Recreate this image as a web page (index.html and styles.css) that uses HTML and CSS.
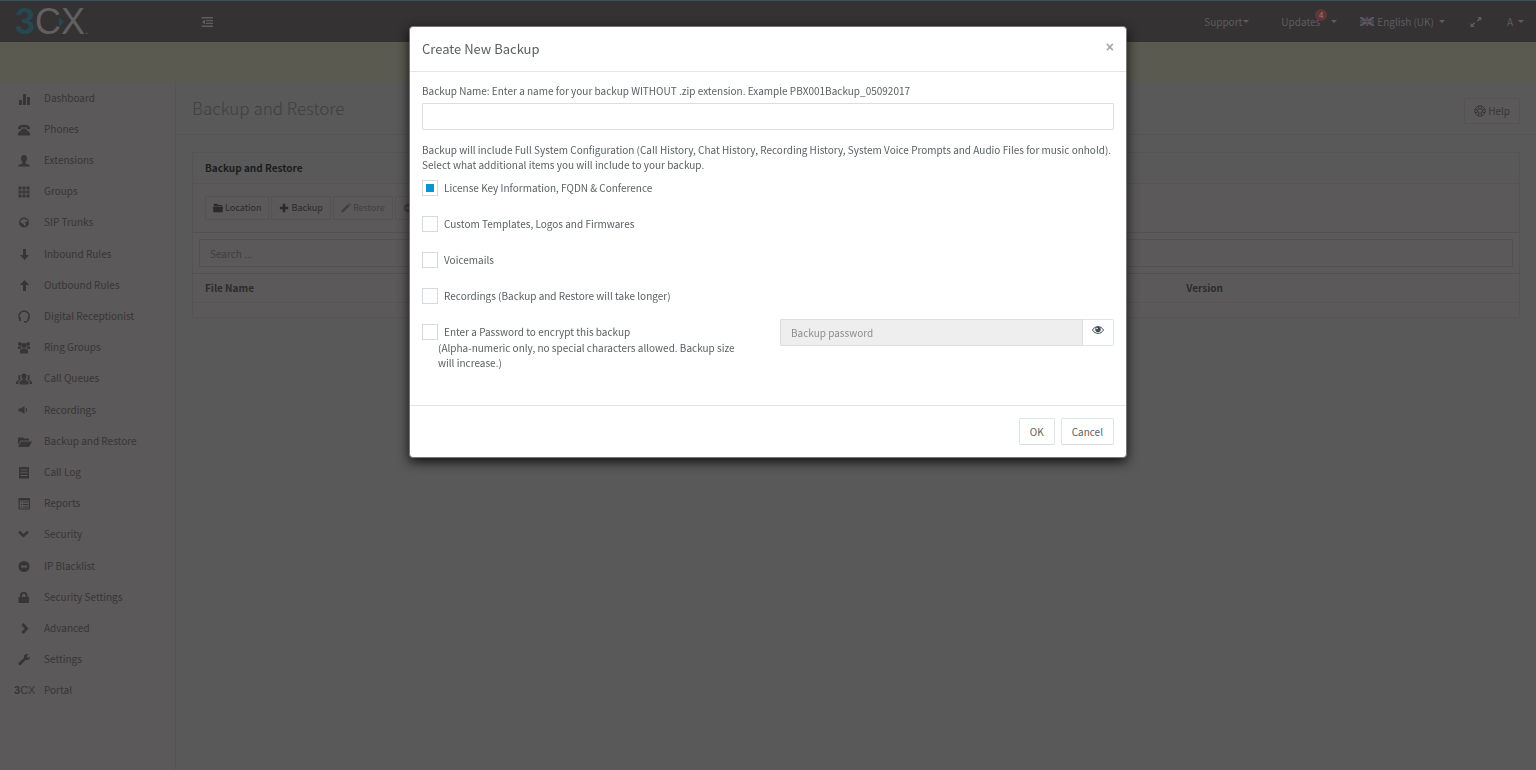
FILE: index.html
```html
<!DOCTYPE html>
<html lang="en">
<head>
<meta charset="utf-8">
<title>3CX - Backup and Restore</title>
<link rel="stylesheet" href="styles.css">
</head>
<body>
<header class="topbar">
  <a class="logo" href="#" aria-label="3CX"><b>3</b><span>CX</span><small>.</small><svg class="logo-arrow" viewBox="0 0 5 10"><path d="M0 0l5 5-5 5z"/></svg></a>
  <button class="menu-toggle" aria-label="Toggle menu"><svg class="icon" viewBox="0 0 16 16"><path d="M2.500 3H14v1.500H2.500zM7 6h7v1.300H7zM7 8.700h7V10H7zM2.500 11.500H14V13H2.500zM6 5.500v5L3 8z"/></svg></button>
  <nav class="topnav">
    <a class="t-support" href="#">Support<i class="caret"></i></a>
    <a class="t-updates" href="#">Updates<span class="badge">4</span><i class="caret"></i></a>
    <a class="t-lang" href="#"><svg class="flag" viewBox="0 0 14 9"><path class="flag-bg" d="M0 0h14v9H0z"/><path class="flag-white" d="M0 0l14 9M14 0L0 9M7 0v9M0 4.500h14"/><path class="flag-red" d="M7 0v9M0 4.500h14"/></svg>English (UK)<i class="caret"></i></a>
    <a class="t-full" href="#" aria-label="Full screen"><svg class="icon" viewBox="0 0 16 16"><path d="M9.500 3H13.500v4l-1.400-1.400-2.200 2.100L8.800 6.600l2.100-2.200zM7.200 9.400L5.100 11.600 6.500 13h-4V9l1.400 1.400L6.100 8.300z"/></svg></a>
    <a class="t-user" href="#">A<i class="caret"></i></a>
  </nav>
</header>
<div class="banner"></div>
<div class="layout">
  <aside class="sidebar">
    <ul>
      <li><a href="#"><svg class="icon" viewBox="0 0 16 16"><path d="M3 10h3v5H3zM7 4h3v11H7zM11 7h3v8h-3z"/></svg>Dashboard</a></li>
      <li><a href="#"><svg class="icon" viewBox="0 0 16 16"><path d="M2 7C2 2.500 14 2.500 14 7v1h-3V6.500H5V8H2zM6.500 7.500h3L14 12v2.500H2V12z"/></svg>Phones</a></li>
      <li><a href="#"><svg class="icon" viewBox="0 0 16 16"><path d="M8 3c2 0 3 1.500 3 3.500S10 9.500 9.500 10v1.500l4 1.500v1.500h-11V13l4-1.500V10C6 9.500 5 8.500 5 6.500S6 3 8 3z"/></svg>Extensions</a></li>
      <li><a href="#"><svg class="icon" viewBox="0 0 16 16"><path d="M2.500 3.500h3v3h-3zM6.500 3.500h3v3h-3zM10.500 3.500h3v3h-3zM2.500 7.500h3v3h-3zM6.500 7.500h3v3h-3zM10.500 7.500h3v3h-3zM2.500 11.500h3v3h-3zM6.500 11.500h3v3h-3zM10.500 11.500h3v3h-3z"/></svg>Groups</a></li>
      <li><a href="#"><svg class="icon" viewBox="0 0 16 16"><path fill-rule="evenodd" d="M8 3.500a5 5 0 100 10 5 5 0 000-10zM8.500 5l2.500 1 .8 2-1.800-.3-1.200 1L10 10l-1.500 2.500L7.500 10l-2-1L4 7.500 6 5.500z"/></svg>SIP Trunks</a></li>
    </ul>
    <ul>
      <li><a href="#"><svg class="icon" viewBox="0 0 16 16"><path d="M7 3h3v6h3l-4.500 5L4 9h3z"/></svg>Inbound Rules</a></li>
      <li><a href="#"><svg class="icon" viewBox="0 0 16 16"><path d="M7 14h3V8h3L8.500 3 4 8h3z"/></svg>Outbound Rules</a></li>
      <li><a href="#"><svg class="icon" viewBox="0 0 16 16"><path class="line" d="M3.200 10A5.200 5.200 0 1113 10"/><path d="M2.500 9h2l.5 4H3.500zM11.800 9h2l-1 4h-1.500zM8 13h3.500v1.500H8z"/></svg>Digital Receptionist</a></li>
      <li><a href="#"><svg class="icon" viewBox="0 0 16 16"><circle cx="4" cy="5" r="2"/><circle cx="12" cy="5" r="2"/><circle cx="8" cy="6.500" r="2.500"/><path d="M2 7.500h3.500L4.500 10H2zM14 7.500h-3.500l1 2.500H14zM4 14.500c-.5-4 1-5 4-5s4.500 1 4 5z"/></svg>Ring Groups</a></li>
      <li><a href="#"><svg class="icon" viewBox="0 0 16 16"><path d="M8 3.500c3 0 3 3 1.500 5.500v1l3 1.500v3h-9v-3l3-1.500V9C5 6.500 5 3.500 8 3.500zM4 5c-2.500 0-2 3-1 4.500L0 12v2h2.500v-3L5 9.500C4 8 4 6.500 4.500 5zM12 5c2.500 0 2 3 1 4.500l3 2.500v2h-2.500v-3L11 9.500c1-1.500 1-3 .5-4.500z"/></svg>Call Queues</a></li>
    </ul>
    <ul>
      <li><a href="#"><svg class="icon" viewBox="0 0 16 16"><path d="M2.500 6.500H5l3.500-2.500v8L5 9.500H2.500z"/><path class="thin" d="M10 6q1 2 0 4"/></svg>Recordings</a></li>
      <li><a href="#"><svg class="icon" viewBox="0 0 16 16"><path d="M2 4.500h5l1 1h5v2H4.500L2 12zM5 8.500h11l-3 5.500H2z"/></svg>Backup and Restore</a></li>
      <li><a href="#"><svg class="icon" viewBox="0 0 16 16"><path fill-rule="evenodd" d="M3 3h10v11.500H3zM4.500 5.500v1h7v-1zM4.500 8.300v1h7v-1zM4.500 11v1h7v-1z"/></svg>Call Log</a></li>
      <li><a href="#"><svg class="icon" viewBox="0 0 16 16"><path fill-rule="evenodd" d="M2.500 3h11.500v11.500H2.500zM3.700 5.500v8h9v-8z"/><path d="M5 6.500h1.200v1H5zM7 6.500h5v1H7zM5 9h1.200v1H5zM7 9h5v1H7zM5 11.500h1.200v1H5zM7 11.500h5v1H7z"/></svg>Reports</a></li>
      <li><a href="#"><svg class="icon" viewBox="0 0 16 16"><path d="M2 6.500l2-1.800L7.500 8 11 4.700l2 1.800-5.500 5z"/></svg>Security</a></li>
    </ul>
    <ul>
      <li><a href="#"><svg class="icon" viewBox="0 0 16 16"><path fill-rule="evenodd" d="M8 3a5.500 5.500 0 100 11A5.500 5.500 0 008 3zM5 7.500v2h6v-2z"/></svg>IP Blacklist</a></li>
      <li><a href="#"><svg class="icon" viewBox="0 0 16 16"><path fill-rule="evenodd" d="M2.500 8H4V6.500C4 1.500 11.500 1.500 11.500 6.500V8H13v6H2.500zM6 8h3.500V6.500c0-2.300-3.500-2.300-3.500 0z"/></svg>Security Settings</a></li>
      <li><a href="#"><svg class="icon" viewBox="0 0 16 16"><path d="M5.500 5l2-2 5 5.500-5 5.500-2-2L8.500 8.500z"/></svg>Advanced</a></li>
      <li><a href="#"><svg class="icon" viewBox="0 0 16 16"><path d="M12.500 3.300L10.800 5l.3 1.500 1.600.2L14 5.300c.3 3-1.700 4.200-4 3.400l-5.200 5c-1.500 1.300-3.300-.6-2-2l5.300-5C7.500 4 9.500 2.500 12.500 3.300z"/></svg>Settings</a></li>
      <li><a href="#"><span class="mini-logo"><b>3</b>CX</span>Portal</a></li>
    </ul>
  </aside>
  <main class="main">
    <div class="page-head">
      <h1>Backup and Restore</h1>
      <button class="help"><svg class="help-icon" viewBox="0 0 12 12"><circle cx="6" cy="6" r="5.200"/><circle cx="6" cy="6" r="2.500"/><path d="M4 1.200l1 2.300M8 1.200L7 3.500M4 10.800l1-2.300M8 10.800L7 8.500M1.200 4l2.300 1M1.200 8l2.300-1M10.800 4L8.500 5M10.800 8L8.500 7"/></svg>Help</button>
    </div>
    <section class="panel">
      <h2>Backup and Restore</h2>
      <div class="toolbar">
        <button><svg viewBox="0 0 12 12"><path d="M1 1h4l1 1.500h5V4H1zM0 4.500h12L11.500 11H.5z"/></svg>Location</button>
        <button><svg viewBox="0 0 12 12"><path d="M4.500 1h3v3.500H11v3H7.500V11h-3V7.500H1v-3h3.500z"/></svg>Backup</button>
        <button class="off" disabled><svg viewBox="0 0 12 12"><path d="M10 0l2 2-1 1-2-2zM8.300 1.600l2 2L3.500 10.500 0 12l1.300-3.500z"/></svg>Restore</button>
        <button class="off" disabled><svg viewBox="0 0 12 12"><path fill-rule="evenodd" d="M6 1a5 5 0 100 10A5 5 0 006 1zM3 5v2h6V5z"/></svg>Delete</button>
      </div>
      <div class="search"><input type="search" placeholder="Search ..." aria-label="Search"></div>
      <table>
        <thead><tr><th class="c-name">File Name</th><th>Version</th></tr></thead>
        <tbody><tr><td colspan="2"></td></tr></tbody>
      </table>
    </section>
  </main>
</div>

<div class="overlay">
  <form class="modal" role="dialog" aria-labelledby="dlg-title">
    <div class="modal-head">
      <h3 id="dlg-title">Create New Backup</h3>
      <button type="button" class="close" aria-label="Close">×</button>
    </div>
    <div class="modal-body">
      <label class="name-label" for="bname">Backup Name: Enter a name for your backup WITHOUT .zip extension. Example PBX001Backup_05092017</label>
      <input class="field" id="bname" type="text">
      <p>Backup will include Full System Configuration (Call History, Chat History, Recording History, System Voice Prompts and Audio Files for music onhold). Select what additional items you will include to your backup.</p>
      <div class="checks">
        <label><input type="checkbox" checked>License Key Information, FQDN &amp; Conference</label>
        <label><input type="checkbox">Custom Templates, Logos and Firmwares</label>
        <label><input type="checkbox">Voicemails</label>
        <label><input type="checkbox">Recordings (Backup and Restore will take longer)</label>
        <div class="password-row">
          <div>
            <label><input type="checkbox">Enter a Password to encrypt this backup</label>
            <div class="hint">(Alpha-numeric only, no special characters allowed. Backup size will increase.)</div>
          </div>
          <div class="password">
            <input class="field" type="password" placeholder="Backup password" aria-label="Backup password" disabled>
            <button type="button" aria-label="Show password"><svg viewBox="0 0 12 10"><path d="M.5 5C3 .5 9 .5 11.500 5 9 9.500 3 9.500.5 5z" fill="none" stroke="currentColor"/><circle cx="6" cy="4.500" r="2.700"/><circle cx="5" cy="3.500" r=".8" fill="#fff"/></svg></button>
          </div>
        </div>
      </div>
    </div>
    <div class="modal-foot">
      <button class="btn" type="button">OK</button>
      <button class="btn" type="button">Cancel</button>
    </div>
  </form>
</div>
</body>
</html>
```
FILE: styles.css
```css
* { box-sizing: border-box; }
body {
  margin: 0;
  min-height: 100vh;
  display: flex;
  flex-direction: column;
  background: #595959;
  color: #363637;
  font: 10px/16px "Noto Sans CJK SC", "Source Sans Pro", sans-serif;
}
a { color: inherit; text-decoration: none; }
button, input { font: inherit; color: inherit; }
svg { fill: currentColor; flex: none; }
.icon { width: 16px; height: 16px; }
.line { fill: none; stroke: currentColor; stroke-width: 1.5; }
.thin { fill: none; stroke: currentColor; }

.topbar {
  height: 42px;
  display: flex;
  align-items: center;
  background: #343233;
  border-top: 1px solid #3b525c;
  color: #5f5d5e;
}
.logo {
  position: relative;
  display: flex;
  align-items: baseline;
  width: 199px;
  padding-left: 15px;
  font: 36px/41px "Liberation Sans", Arial, sans-serif;
  color: #625f60;
}
.logo b { color: #274753; }
.logo small { font-size: 12px; line-height: 16px; }
.logo-arrow { position: absolute; left: 59px; top: 16px; width: 5px; height: 10px; color: #274753; }
.menu-toggle { display: flex; padding: 0; border: 0; background: none; }
.topnav { display: flex; margin-left: auto; padding-right: 12px; }
.topnav a { position: relative; display: flex; align-items: center; }
.caret {
  margin-left: 1px;
  border: 3px solid transparent;
  border-top-color: currentColor;
  border-bottom: 0;
}
.t-support { margin-right: 32px; }
.t-updates, .t-lang, .t-full { margin-right: 23px; }
.t-updates .caret { margin-left: 11px; }
.t-lang .caret, .t-user .caret { margin-left: 5px; }
.badge {
  position: absolute;
  left: 34px;
  top: -5px;
  width: 12px;
  height: 12px;
  border-radius: 6px;
  background: #633536;
  color: #8a8080;
  font-size: 8px;
  line-height: 12px;
  text-align: center;
}
.flag { width: 14px; height: 9px; margin-right: 3px; }
.flag-bg { fill: #343450; }
.flag-white { stroke: #5c595d; stroke-width: 2; fill: none; }
.flag-red { stroke: #6a3238; stroke-width: 1; fill: none; }

.banner { height: 40px; background: #5b5a51; }
.layout { flex: 1; display: flex; }

.sidebar { width: 176px; background: #5c595a; border-right: 1px solid #565556; }
.sidebar ul { list-style: none; margin: 0 0 1px; padding: 0; }
.sidebar a { display: flex; align-items: center; gap: 12px; height: 31px; padding-left: 16px; }
.mini-logo {
  width: 24px;
  margin: 0 -6px 0 -2px;
  font: 11px/16px "Liberation Sans", Arial, sans-serif;
}

.main { flex: 1; min-width: 0; }
.page-head {
  display: flex;
  align-items: center;
  justify-content: space-between;
  height: 53px;
  padding: 0 16px;
  border-bottom: 1px solid #545454;
}
h1 { margin: 0; color: #3f3f40; font-size: 17px; line-height: 24px; font-weight: 300; }
.help {
  display: flex;
  align-items: center;
  gap: 2px;
  height: 26px;
  margin-top: 6px;
  padding: 0 9px;
  background: #5c595a;
  border: 1px solid #555455;
  border-radius: 2px;
}
.help-icon { width: 12px; height: 12px; fill: none; stroke: currentColor; }
.panel {
  margin: 17px 16px 0;
  border: 1px solid #555354;
  background: #5c595a;
}
h2 {
  margin: 0;
  padding: 7px 12px;
  background: #595959;
  border-bottom: 1px solid #555455;
  color: #1c1d1e;
  font-size: 10px;
  line-height: 16px;
}
.toolbar { display: flex; gap: 2px; padding: 12px; border-bottom: 1px solid #525152; }
.toolbar button {
  display: flex;
  align-items: center;
  gap: 2px;
  height: 24px;
  padding: 0 7px;
  border: 1px solid #555455;
  background: none;
  font-size: 9px;
  color: #2b2b2c;
}
.toolbar svg { width: 10px; height: 10px; }
.toolbar .off { color: #404041; }
.search { padding: 6px; border-bottom: 1px solid #525152; }
.search input {
  display: block;
  width: 100%;
  height: 28px;
  padding: 0 10px;
  background: none;
  border: 1px solid #525152;
}
.search input::placeholder { color: #3f3f40; opacity: 1; }
table { width: 100%; border-collapse: collapse; }
th { padding: 6px 12px; text-align: left; line-height: 16px; color: #2b2c2d; }
td { height: 14px; padding: 0; border-top: 1px solid #575556; }
.c-name { width: 74%; }

.overlay { position: fixed; inset: 0; padding: 26px 16px; }
.modal {
  max-width: 718px;
  margin: 0 auto;
  background: #fff;
  border: 1px solid #777;
  border-radius: 4px;
  box-shadow: 0 4px 12px rgba(0, 0, 0, .8);
  color: #5a6064;
}
.modal-head {
  display: flex;
  justify-content: space-between;
  padding: 12px;
  border-bottom: 1px solid #e5e5e5;
}
h3 { margin: 0; font-size: 13px; line-height: 20px; font-weight: 400; }
.close {
  align-self: flex-start;
  padding: 0;
  border: 0;
  background: none;
  color: #a5a5a5;
  font: bold 14px/16px "Liberation Sans", Arial, sans-serif;
}
.modal-body { padding: 11px 12px 35px; }
.name-label { display: block; margin-bottom: 4px; }
.field {
  display: block;
  width: 100%;
  height: 27px;
  padding: 0 10px;
  background: #fff;
  border: 1px solid #dbdedf;
  border-radius: 1px;
}
p { margin: 12px 0 8px; line-height: 15px; }
.checks { display: flex; flex-direction: column; gap: 20px; }
.checks label { display: flex; align-items: center; gap: 6px; }
.checks input[type="checkbox"] {
  appearance: none;
  width: 16px;
  height: 16px;
  margin: 0;
  border: 1px solid #d4dbde;
  background: #fff;
}
.checks input[type="checkbox"]:checked { background: #0b94cd; box-shadow: inset 0 0 0 3px #fff; }
.password-row { display: grid; grid-template-columns: 1fr 1fr; gap: 24px; }
.hint { padding: 0 20px 0 16px; line-height: 15px; }
.password { display: flex; align-self: start; margin-top: -5px; }
.password .field { flex: 1; min-width: 0; background: #eee; }
.password .field::placeholder { color: #8d8d8d; opacity: 1; }
.password button {
  width: 32px;
  margin-left: -1px;
  padding: 0 0 3px;
  border: 1px solid #dee5e7;
  border-left-color: #dbdedf;
  border-radius: 0 2px 2px 0;
  background: #fff;
  color: #3e4b53;
}
.password svg { width: 12px; height: 10px; }
.modal-foot {
  display: flex;
  justify-content: flex-end;
  gap: 6px;
  padding: 12px;
  border-top: 1px solid #e5e5e5;
}
.btn {
  height: 27px;
  padding: 0 10px;
  background: #fff;
  border: 1px solid #dee5e7;
  border-bottom-color: #d8dcdd;
  border-radius: 2px;
}
```
